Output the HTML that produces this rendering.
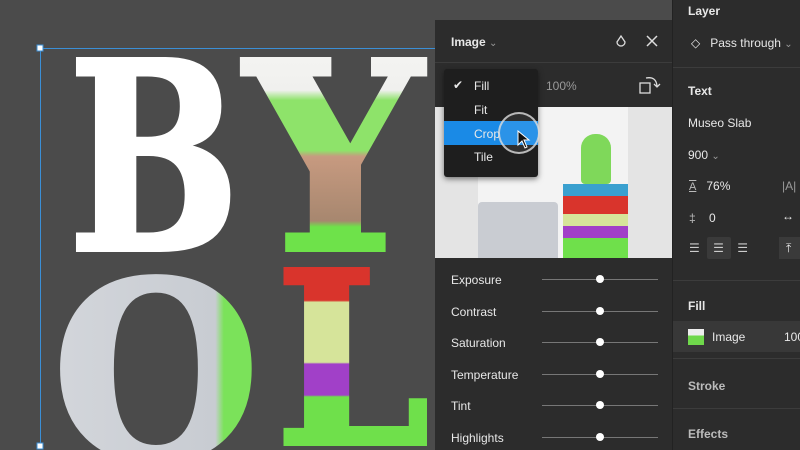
<!DOCTYPE html>
<html><head><meta charset="utf-8"><style>
*{margin:0;padding:0;box-sizing:border-box}
body{width:800px;height:450px;overflow:hidden;background:#4b4b4b;font-family:"Liberation Sans",sans-serif;position:relative;color:#eee}
.a{position:absolute}
.t{position:absolute;font-size:12px;color:#e8e8e8;white-space:nowrap;line-height:14px}
.b{font-weight:bold}
.g{color:#9a9a9a}
.tr{position:absolute;left:542px;width:116px;height:1px;background:#777}
.kn{position:absolute;left:596px;width:8px;height:8px;border-radius:50%;background:#fff}
.hr{position:absolute;height:1px;background:#3c3c3c}
</style></head><body>
<svg class="a" style="left:0;top:0" width="440" height="450">
<defs>
<linearGradient id="gy" gradientUnits="userSpaceOnUse" x1="0" y1="50" x2="0" y2="251">
<stop offset="0" stop-color="#f4f4f2"/><stop offset=".2" stop-color="#f0f0ee"/><stop offset=".25" stop-color="#8ee36a"/><stop offset=".5" stop-color="#8ee36a"/><stop offset=".53" stop-color="#c79a80"/><stop offset=".85" stop-color="#a7876f"/><stop offset=".88" stop-color="#6ee24a"/><stop offset="1" stop-color="#6ee24a"/></linearGradient>
<linearGradient id="go" gradientUnits="userSpaceOnUse" x1="50" y1="0" x2="262" y2="0">
<stop offset="0" stop-color="#d3d6db"/><stop offset=".78" stop-color="#c8ccd2"/><stop offset=".82" stop-color="#7be25a"/><stop offset="1" stop-color="#7be25a"/></linearGradient>
<linearGradient id="gl" gradientUnits="userSpaceOnUse" x1="0" y1="264" x2="0" y2="446">
<stop offset="0" stop-color="#d9342c"/><stop offset=".2" stop-color="#d9342c"/><stop offset=".21" stop-color="#d6e49a"/><stop offset=".54" stop-color="#d6e49a"/><stop offset=".55" stop-color="#a140c8"/><stop offset=".72" stop-color="#a140c8"/><stop offset=".73" stop-color="#6fe04b"/><stop offset="1" stop-color="#6fe04b"/></linearGradient>
</defs>
<text x="68" y="250" font-family="DejaVu Serif" font-weight="bold" font-size="262" fill="#fff" stroke="#fff" stroke-width="4" textLength="172" lengthAdjust="spacingAndGlyphs">B</text>
<text x="244" y="250" font-family="DejaVu Serif" font-weight="bold" font-size="262" fill="url(#gy)" stroke="url(#gy)" stroke-width="4" textLength="179" lengthAdjust="spacingAndGlyphs">Y</text>
<text x="52" y="458" font-family="DejaVu Serif" font-weight="bold" font-size="245" fill="url(#go)" stroke="url(#go)" stroke-width="4" textLength="208" lengthAdjust="spacingAndGlyphs">O</text>
<text x="275" y="444" font-family="DejaVu Serif" font-weight="bold" font-size="240" fill="url(#gl)" stroke="url(#gl)" stroke-width="4" textLength="155" lengthAdjust="spacingAndGlyphs">L</text>
<rect x="40" y="48" width="395" height="1" fill="#3b8fd6"/>
<rect x="40" y="48" width="1" height="400" fill="#3b8fd6"/>
<rect x="37" y="45" width="6" height="6" fill="#fff" stroke="#3b8fd6"/>
<rect x="37" y="443" width="6" height="6" fill="#fff" stroke="#3b8fd6"/>
</svg>

<div class="a" style="left:435px;top:20px;width:237px;height:430px;background:#2c2c2c"></div>
<div class="t b" style="left:451px;top:35px">Image <span class="g" style="font-weight:normal;font-size:10px">⌄</span></div>
<svg class="a" style="left:613px;top:33px" width="50" height="16"><path d="M8 3 L4 9 A4 4 0 0 0 12 9 Z" fill="none" stroke="#ddd" stroke-width="1.3"/><path d="M34 3 L44 13 M44 3 L34 13" stroke="#ddd" stroke-width="1.5"/></svg>
<div class="hr" style="left:435px;top:62px;width:237px"></div>
<div class="t g" style="left:546px;top:79px">100%</div>
<svg class="a" style="left:638px;top:74px" width="24" height="24"><rect x="2" y="9" width="10" height="10" fill="none" stroke="#ddd" stroke-width="1.3"/><path d="M8 4 Q18 2 19 12 M16 10 L19 13 L22 10" fill="none" stroke="#ddd" stroke-width="1.3"/></svg>
<div class="a" style="left:435px;top:107px;width:237px;height:151px;background:#e4e4e4"></div>
<div class="a" style="left:478px;top:107px;width:150px;height:151px;background:#f3f3f3"></div>
<div class="a" style="left:478px;top:202px;width:80px;height:56px;background:#c9ccd2;border-radius:4px 4px 0 0"></div>
<div class="a" style="left:581px;top:134px;width:30px;height:50px;background:#7fd85a;border-radius:14px 14px 4px 4px"></div>
<div class="a" style="left:563px;top:184px;width:65px;height:14px;background:#3aa0cf"></div>
<div class="a" style="left:563px;top:196px;width:65px;height:18px;background:#d9342c"></div>
<div class="a" style="left:563px;top:214px;width:65px;height:12px;background:#d6e49a"></div>
<div class="a" style="left:563px;top:226px;width:65px;height:12px;background:#a140c8"></div>
<div class="a" style="left:563px;top:238px;width:65px;height:20px;background:#6fe04b"></div>
<div class="a" style="left:444px;top:69px;width:94px;height:108px;background:#1e1e1e;border-radius:3px;box-shadow:0 2px 6px rgba(0,0,0,.5)"></div>
<div class="a" style="left:444px;top:121px;width:94px;height:24px;background:#1a8ae6"></div>
<div class="t" style="left:453px;top:78px">✔</div>
<div class="t" style="left:474px;top:79px">Fill</div>
<div class="t" style="left:474px;top:103px">Fit</div>
<div class="t" style="left:474px;top:127px">Crop</div>
<div class="t" style="left:474px;top:150px">Tile</div>
<div class="a" style="left:498px;top:112px;width:42px;height:42px;border-radius:50%;border:2px solid rgba(220,220,220,.8);background:rgba(255,255,255,.08)"></div>
<svg class="a" style="left:517px;top:130px" width="14" height="20"><path d="M1 1 L1 15 L5 11 L8 18 L10 17 L7 10 L12 10 Z" fill="#111" stroke="#fff" stroke-width="1"/></svg>
<div class="t" style="left:451px;top:273px">Exposure</div><div class="tr" style="top:279px"></div><div class="kn" style="top:275px"></div>
<div class="t" style="left:451px;top:305px">Contrast</div><div class="tr" style="top:311px"></div><div class="kn" style="top:307px"></div>
<div class="t" style="left:451px;top:336px">Saturation</div><div class="tr" style="top:342px"></div><div class="kn" style="top:338px"></div>
<div class="t" style="left:451px;top:368px">Temperature</div><div class="tr" style="top:374px"></div><div class="kn" style="top:370px"></div>
<div class="t" style="left:451px;top:399px">Tint</div><div class="tr" style="top:405px"></div><div class="kn" style="top:401px"></div>
<div class="t" style="left:451px;top:431px">Highlights</div><div class="tr" style="top:437px"></div><div class="kn" style="top:433px"></div>

<div class="a" style="left:672px;top:0;width:128px;height:450px;background:#2c2c2c;border-left:1px solid #222"></div>
<div class="t b" style="left:688px;top:4px">Layer</div>
<div class="t" style="left:691px;top:36px">◇&nbsp;&nbsp; Pass through <span class="g" style="font-size:10px">⌄</span></div>
<div class="hr" style="left:673px;top:67px;width:127px"></div>
<div class="t b" style="left:688px;top:84px">Text</div>
<div class="t" style="left:688px;top:116px">Museo Slab</div>
<div class="t" style="left:688px;top:148px">900 <span class="g" style="font-size:10px">⌄</span></div>
<div class="t" style="left:689px;top:179px"><span style="text-decoration:underline overline;color:#bbb;font-size:11px">A</span>&nbsp;&nbsp; 76%</div>
<div class="t g" style="left:782px;top:179px">|A|</div>
<div class="t" style="left:689px;top:211px"><span style="color:#bbb">‡</span>&nbsp;&nbsp;&nbsp; 0</div>
<div class="t" style="left:782px;top:209px">↔</div>
<div class="a" style="left:707px;top:237px;width:24px;height:22px;background:#3a3a3a;border-radius:2px"></div>
<div class="t" style="left:689px;top:241px;color:#ccc">☰&nbsp;&nbsp;&nbsp; ☰&nbsp;&nbsp;&nbsp; ☰</div>
<div class="a" style="left:779px;top:237px;width:21px;height:22px;background:#3a3a3a"></div>
<div class="t" style="left:786px;top:241px">⤒</div>
<div class="hr" style="left:673px;top:280px;width:127px"></div>
<div class="t b" style="left:688px;top:299px">Fill</div>
<div class="a" style="left:673px;top:321px;width:127px;height:31px;background:#383838"></div>
<div class="a" style="left:688px;top:329px;width:16px;height:16px;background:linear-gradient(#eee 40%,#6fd84b 40%)"></div>
<div class="t" style="left:712px;top:330px">Image</div>
<div class="t" style="left:784px;top:330px">100</div>
<div class="hr" style="left:673px;top:358px;width:127px"></div>
<div class="t b" style="left:688px;top:379px;color:#bbb">Stroke</div>
<div class="hr" style="left:673px;top:408px;width:127px"></div>
<div class="t b" style="left:688px;top:427px;color:#bbb">Effects</div>
</body></html>
